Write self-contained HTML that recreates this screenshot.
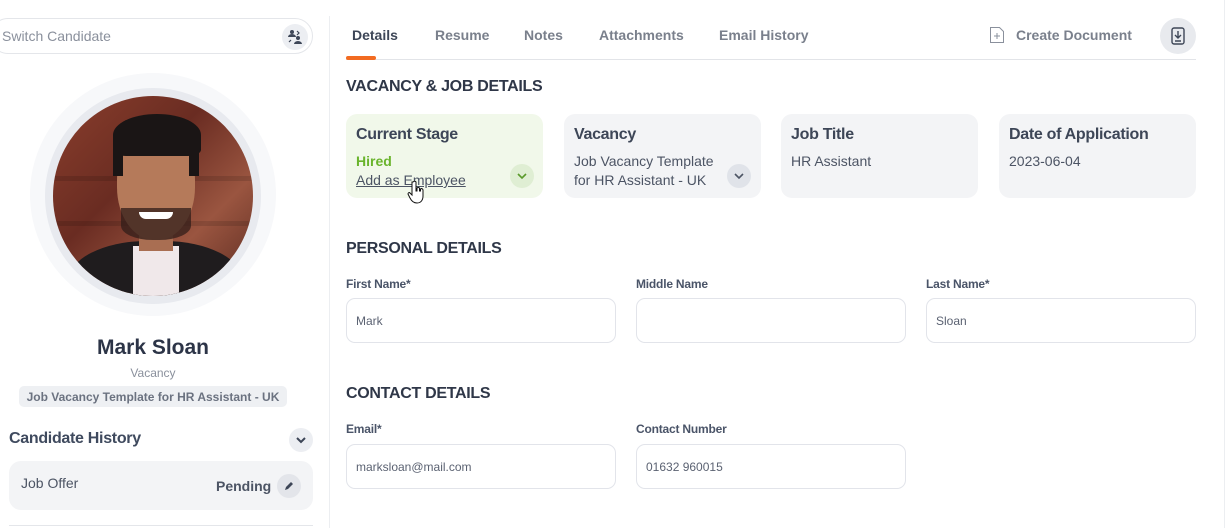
<!DOCTYPE html>
<html><head><style>
*{box-sizing:border-box;margin:0;padding:0}
body{width:1230px;height:528px;overflow:hidden;background:#fff;font-family:"Liberation Sans",sans-serif;color:#3a4356;position:relative}
.a{position:absolute}
.lbl{font-size:12px;font-weight:bold;color:#4a5468;letter-spacing:-0.2px}
.inp{border:1px solid #e2e4ea;border-radius:9px;height:45px;font-size:12px;color:#5b6272;padding:15px 0 0 9px}
.h{font-size:16px;color:#2f3748;letter-spacing:-0.3px;font-weight:bold}
.card{background:#f3f4f6;border-radius:11px;height:84px;width:197px;padding:12px 10px}
.card .t{font-size:16px;color:#3d4657;margin-bottom:8px;font-weight:bold;letter-spacing:-0.3px}
.card .v{font-size:14px;color:#4c5464;line-height:19px}
.chev{width:24px;height:24px;border-radius:50%;background:#e0e3e9;display:flex;align-items:center;justify-content:center}
.tab{font-size:14px;color:#7a808c;top:27px;font-weight:bold}
</style></head><body>
<div class="a" style="left:-10px;top:18px;width:323px;height:36px;border:1px solid #e4e6ea;border-radius:18px"></div>
<div class="a" style="left:2px;top:28px;font-size:14px;color:#8a909c">Switch Candidate</div>
<div class="a chev" style="left:282px;top:24px;width:26px;height:26px;background:#eceef2">
<svg width="16" height="16" viewBox="0 0 16 16" fill="#3d4657"><circle cx="5" cy="3" r="2"/><path d="M1 8a4 3 0 0 1 8 0z"/><circle cx="11" cy="9" r="2"/><path d="M7 15a4 3 0 0 1 8 0z"/><path d="M10 2l2 2-2 2" stroke="#3d4657" fill="none" stroke-width="1.2"/><path d="M4 11l-2 2" stroke="#3d4657" fill="none" stroke-width="1.2"/></svg></div>
<div class="a" style="left:30px;top:73px;width:246px;height:243px;border-radius:50%;background:#f7f8fa"></div>
<div class="a" style="left:45px;top:88px;width:216px;height:216px;border-radius:50%;background:#e8eaef"></div>
<div class="a" style="left:53px;top:96px;width:200px;height:200px;border-radius:50%;overflow:hidden;background:linear-gradient(135deg,#8a3e2c,#6a2c22 40%,#9a5540 70%,#5a2a20)">
 <div class="a" style="left:0;top:80px;width:200px;height:5px;background:rgba(0,0,0,.12)"></div>
 <div class="a" style="left:0;top:125px;width:200px;height:5px;background:rgba(0,0,0,.12)"></div>
 <div class="a" style="left:15px;top:145px;width:175px;height:90px;border-radius:45% 45% 0 0;background:#1f1c1e"></div>
 <div class="a" style="left:80px;top:150px;width:46px;height:60px;background:#f0e8ea"></div>
 <div class="a" style="left:86px;top:115px;width:34px;height:40px;background:#a96e52"></div>
 <div class="a" style="left:64px;top:34px;width:78px;height:110px;border-radius:45% 45% 48% 48%;background:#b57a5a"></div>
 <div class="a" style="left:68px;top:112px;width:70px;height:32px;border-radius:0 0 45% 45%;background:rgba(50,30,25,.75)"></div>
 <div class="a" style="left:86px;top:116px;width:34px;height:7px;border-radius:0 0 8px 8px;background:#fff"></div>
 <div class="a" style="left:60px;top:18px;width:88px;height:42px;border-radius:50% 50% 15% 15%;background:#1a1515"></div>
 <div class="a" style="left:60px;top:40px;width:10px;height:40px;background:#1a1515"></div>
 <div class="a" style="left:136px;top:40px;width:10px;height:40px;background:#1a1515"></div>
</div>
<div class="a" style="left:0;top:336px;width:306px;text-align:center;font-size:21px;font-weight:bold;color:#2c3447">Mark Sloan</div>
<div class="a" style="left:0;top:366px;width:306px;text-align:center;font-size:12px;color:#8a909c">Vacancy</div>
<div class="a" style="left:19px;top:386px;width:268px;height:21px;background:#eef0f3;border-radius:5px;font-size:12px;font-weight:bold;color:#6b7280;text-align:center;padding-top:4px">Job Vacancy Template for HR Assistant - UK</div>
<div class="a" style="left:9px;top:430px;font-size:16px;color:#3f4a5e;font-weight:bold;letter-spacing:-0.3px">Candidate History</div>
<div class="a chev" style="left:289px;top:428px;background:#eceef2"><svg width="10" height="8"><path d="M1 2l4 4 4-4" stroke="#3d4657" stroke-width="2" fill="none"/></svg></div>
<div class="a" style="left:9px;top:461px;width:304px;height:49px;background:#f3f4f6;border-radius:12px"></div>
<div class="a" style="left:21px;top:475px;font-size:14px;color:#4c5464">Job Offer</div>
<div class="a" style="left:216px;top:478px;font-size:14px;color:#4c5464;font-weight:bold">Pending</div>
<div class="a chev" style="left:277px;top:474px;background:#e3e5ea"><svg width="10" height="10"><path d="M1 9l1-3 5-5 2 2-5 5z" fill="#3d4657"/></svg></div>
<div class="a" style="left:9px;top:525px;width:304px;height:1px;background:#e4e6ea"></div>
<div class="a" style="left:329px;top:16px;width:1px;height:512px;background:#eceef1"></div>
<div class="a" style="left:1224px;top:0;width:1px;height:528px;background:#eceef1"></div>
<div class="a tab" style="left:352px;color:#3d4657">Details</div>
<div class="a tab" style="left:435px">Resume</div>
<div class="a tab" style="left:524px">Notes</div>
<div class="a tab" style="left:599px">Attachments</div>
<div class="a tab" style="left:719px">Email History</div>
<svg class="a" style="left:989px;top:26px" width="16" height="18"><path d="M1.5 1.5h9l4 4v11h-13z" stroke="#8a909c" fill="none"/><path d="M8 7v6M5 10h6" stroke="#8a909c"/></svg>
<div class="a tab" style="left:1016px">Create Document</div>
<div class="a chev" style="left:1160px;top:18px;width:36px;height:36px;background:#e8eaee"><svg width="14" height="18"><rect x="1" y="1" width="12" height="16" rx="2" stroke="#3d4657" fill="none" stroke-width="1.4"/><path d="M7 4v7M4 8l3 3 3-3M4 14h6" stroke="#3d4657" fill="none" stroke-width="1.4"/></svg></div>
<div class="a" style="left:346px;top:59px;width:850px;height:1px;background:#e2e4e8"></div>
<div class="a" style="left:346px;top:56px;width:30px;height:4px;border-radius:2px;background:#f26b21"></div>
<div class="a h" style="left:346px;top:78px">VACANCY &amp; JOB DETAILS</div>
<div class="a card" style="left:346px;top:114px;background:#f1f8ea"><div class="t">Current Stage</div><div class="v" style="color:#6ab42d;font-weight:bold">Hired</div><div class="v" style="text-decoration:underline">Add as Employee</div></div>
<div class="a chev" style="left:510px;top:164px;background:#dfeed3"><svg width="10" height="8"><path d="M1 2l4 4 4-4" stroke="#5a9a2a" stroke-width="1.6" fill="none"/></svg></div>
<div class="a card" style="left:564px;top:114px"><div class="t">Vacancy</div><div class="v">Job Vacancy Template<br>for HR Assistant - UK</div></div>
<div class="a chev" style="left:727px;top:164px"><svg width="10" height="8"><path d="M1 2l4 4 4-4" stroke="#4c5464" stroke-width="1.6" fill="none"/></svg></div>
<div class="a card" style="left:781px;top:114px"><div class="t">Job Title</div><div class="v">HR Assistant</div></div>
<div class="a card" style="left:999px;top:114px"><div class="t">Date of Application</div><div class="v">2023-06-04</div></div>
<svg class="a" style="left:407px;top:180px" width="18" height="24"><path d="M6 2c1-1 2.5-1 3 0v9h1V8c1-1 2.5 0 2.5 0v3h1v-2c1-1 2.5 0 2.5 1v6c0 4-2 7-6 7s-6-3-7-5l-2-4c0-1 1-2 2-1l2 2V2z" fill="#fff" stroke="#111" stroke-width="1"/></svg>
<div class="a h" style="left:346px;top:240px">PERSONAL DETAILS</div>
<div class="a lbl" style="left:346px;top:277px">First Name*</div>
<div class="a lbl" style="left:636px;top:277px">Middle Name</div>
<div class="a lbl" style="left:926px;top:277px">Last Name*</div>
<div class="a inp" style="left:346px;top:298px;width:270px">Mark</div>
<div class="a inp" style="left:636px;top:298px;width:270px"></div>
<div class="a inp" style="left:926px;top:298px;width:270px">Sloan</div>
<div class="a h" style="left:346px;top:385px">CONTACT DETAILS</div>
<div class="a lbl" style="left:346px;top:422px">Email*</div>
<div class="a lbl" style="left:636px;top:422px">Contact Number</div>
<div class="a inp" style="left:346px;top:444px;width:270px">marksloan@mail.com</div>
<div class="a inp" style="left:636px;top:444px;width:270px">01632 960015</div>
</body></html>
